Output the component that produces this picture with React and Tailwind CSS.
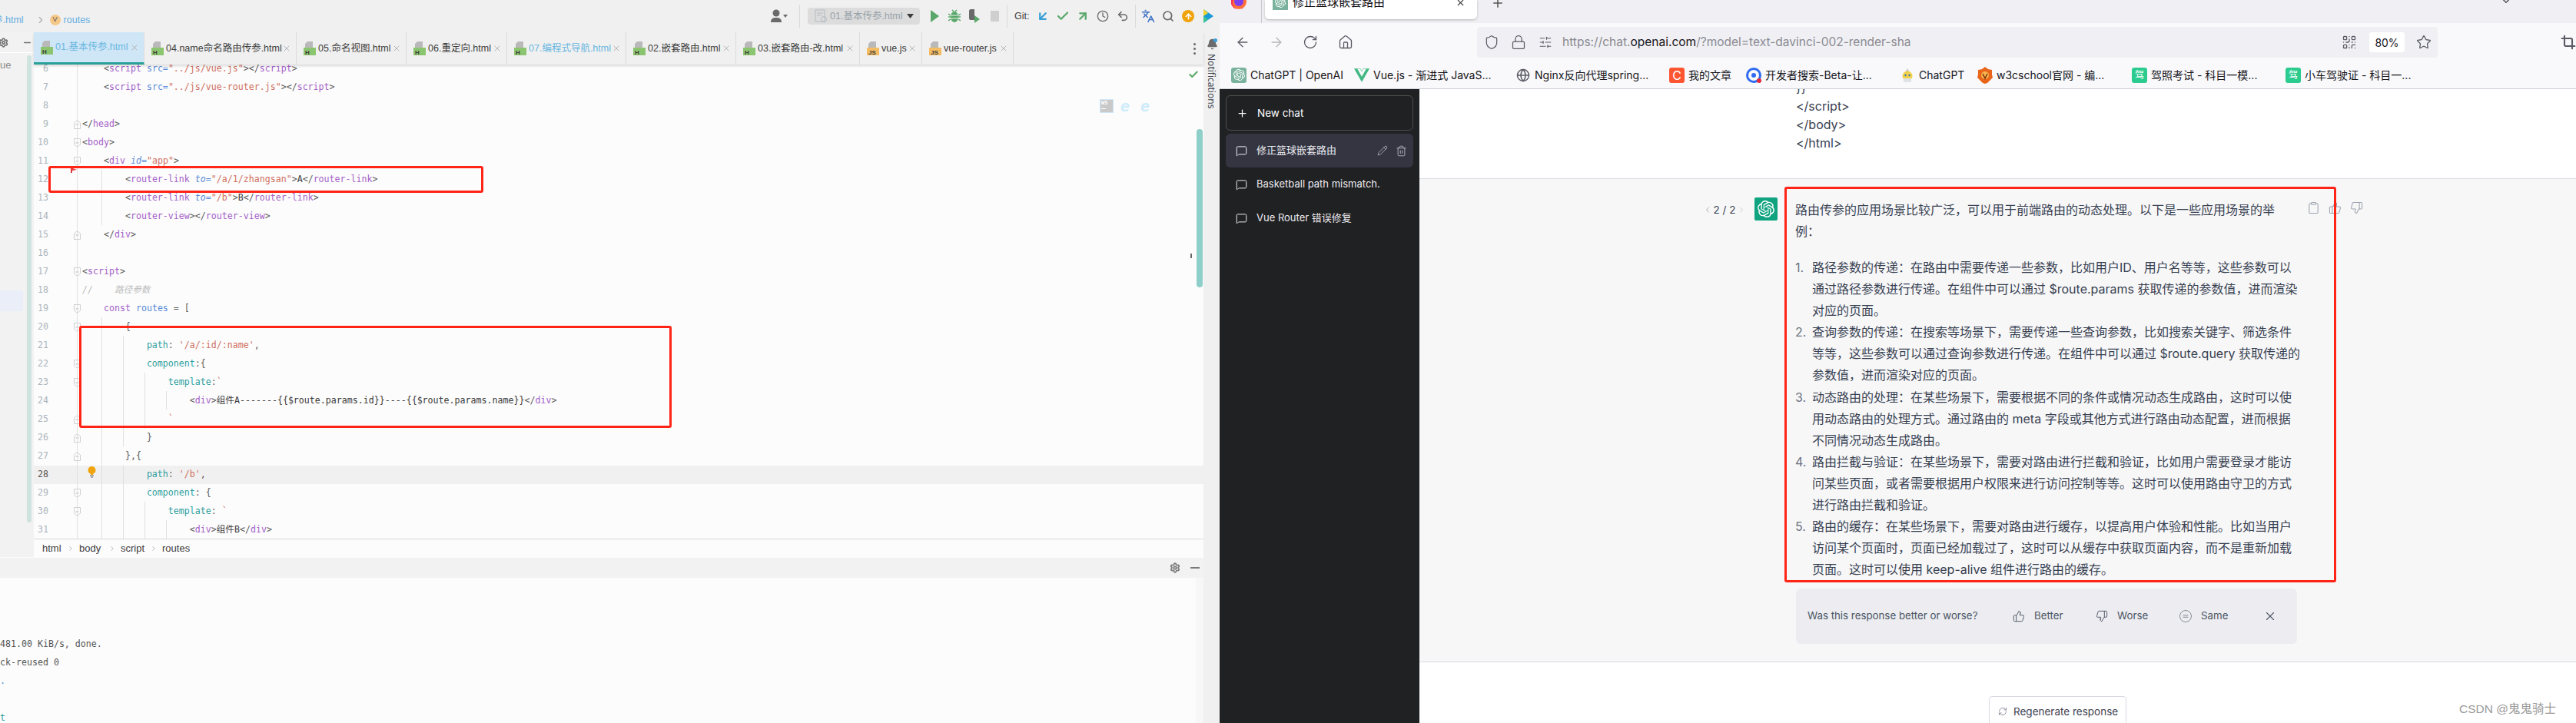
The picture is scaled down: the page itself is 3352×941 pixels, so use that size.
import React from 'react';
import {
  ArrowLeft, ArrowRight, RotateCw, Home, Shield, Lock, SlidersHorizontal, QrCode, Star, Crop, Plus, X,
  MessageSquare, Pencil, Trash2, ThumbsUp, ThumbsDown, Clipboard, RefreshCw, Globe, Check, ArrowDownLeft,
  ArrowUpRight, Clock, Undo2, Languages, Search, Settings, Minus, Bell, ArrowUp, ChevronRight, ChevronLeft, ChevronDown, Equal,
} from 'lucide-react';
import { SiOpenai, SiVuedotjs } from 'react-icons/si';

const UI = "font-['Inter','Noto_Sans_CJK_SC',sans-serif]";
const IDE = "font-['Liberation_Sans','Noto_Sans_CJK_SC',sans-serif]";
const MONO = "font-['DejaVu_Sans_Mono','Noto_Sans_CJK_SC',monospace]";

const C = {
  p: 'text-[#5c5c5c]',
  n: 'text-[#a45fc8]',
  a: 'text-[#5a8bd8]',
  s: 'text-[#cf6f60]',
  k: 'text-[#2f9f9f]',
  t: 'text-[#3a3a3a]',
  c: 'text-[#bdbdbd] italic',
  i: 'text-[#5a8bd8] italic',
};

const tag = (name, close) => [['p', close ? '</' : '<'], ['n', name]];
const lines = [
  { n: 6, x: [['t', '    '], ...tag('script'), ['t', ' '], ['a', 'src='], ['s', '"../js/vue.js"'], ['p', '>'], ...tag('script', 1), ['p', '>']] },
  { n: 7, x: [['t', '    '], ...tag('script'), ['t', ' '], ['a', 'src='], ['s', '"../js/vue-router.js"'], ['p', '>'], ...tag('script', 1), ['p', '>']] },
  { n: 8, x: [] },
  { n: 9, f: 'c', x: [...tag('head', 1), ['p', '>']] },
  { n: 10, f: 't', x: [...tag('body'), ['p', '>']] },
  { n: 11, f: 't', x: [['t', '    '], ...tag('div'), ['t', ' '], ['i', 'id'], ['a', '='], ['s', '"app"'], ['p', '>']] },
  { n: 12, x: [['t', '        '], ...tag('router-link'), ['t', ' '], ['i', 'to'], ['a', '='], ['s', '"/a/1/zhangsan"'], ['p', '>'], ['t', 'A'], ...tag('router-link', 1), ['p', '>']] },
  { n: 13, x: [['t', '        '], ...tag('router-link'), ['t', ' '], ['i', 'to'], ['a', '='], ['s', '"/b"'], ['p', '>'], ['t', 'B'], ...tag('router-link', 1), ['p', '>']] },
  { n: 14, x: [['t', '        '], ...tag('router-view'), ['p', '>'], ...tag('router-view', 1), ['p', '>']] },
  { n: 15, f: 'c', x: [['t', '    '], ...tag('div', 1), ['p', '>']] },
  { n: 16, x: [] },
  { n: 17, f: 't', x: [...tag('script'), ['p', '>']] },
  { n: 18, x: [['c', '//    路径参数']] },
  { n: 19, f: 't', x: [['t', '    '], ['n', 'const'], ['t', ' '], ['a', 'routes'], ['t', ' '], ['p', '= ['] ] },
  { n: 20, f: 't', x: [['t', '        '], ['p', '{']] },
  { n: 21, x: [['t', '            '], ['k', 'path'], ['p', ': '], ['s', "'/a/:id/:name'"], ['p', ',']] },
  { n: 22, f: 't', x: [['t', '            '], ['k', 'component'], ['p', ':{']] },
  { n: 23, f: 't', x: [['t', '                '], ['k', 'template'], ['p', ':'], ['s', '`']] },
  { n: 24, x: [['t', '                    '], ...tag('div'), ['p', '>'], ['t', '组件A-------{{$route.params.id}}----{{$route.params.name}}'], ...tag('div', 1), ['p', '>']] },
  { n: 25, f: 'c', x: [['t', '                '], ['s', '`']] },
  { n: 26, f: 'c', x: [['t', '            '], ['p', '}']] },
  { n: 27, f: 'c', x: [['t', '        '], ['p', '},{']] },
  { n: 28, x: [['t', '            '], ['k', 'path'], ['p', ': '], ['s', "'/b'"], ['p', ',']] },
  { n: 29, f: 't', x: [['t', '            '], ['k', 'component'], ['p', ': {']] },
  { n: 30, f: 't', x: [['t', '                '], ['k', 'template'], ['p', ': '], ['s', '`']] },
  { n: 31, x: [['t', '                    '], ...tag('div'), ['p', '>'], ['t', '组件B'], ...tag('div', 1), ['p', '>']] },
];

const guides = [
  { x: 100, a: 84, b: 701 },
  { x: 132, a: 221, b: 293 },
  { x: 132, a: 413, b: 701 },
  { x: 160, a: 437, b: 581 },
  { x: 160, a: 606, b: 701 },
  { x: 188, a: 485, b: 558 },
  { x: 188, a: 653, b: 701 },
  { x: 216, a: 509, b: 533 },
  { x: 216, a: 677, b: 701 },
];

const tabs = [
  { t: '01.基本传参.html', w: 'w-[144px]', active: true, blue: true },
  { t: '04.name命名路由传参.html', w: 'w-[198px]' },
  { t: '05.命名视图.html', w: 'w-[143px]' },
  { t: '06.重定向.html', w: 'w-[131px]' },
  { t: '07.编程式导航.html', w: 'w-[155px]', blue: true },
  { t: '02.嵌套路由.html', w: 'w-[143px]' },
  { t: '03.嵌套路由-改.html', w: 'w-[161px]' },
  { t: 'vue.js', w: 'w-[81px]', js: true },
  { t: 'vue-router.js', w: 'w-[119px]', js: true },
];

function FileIcon({ js }) {
  return (
    <svg width="16" height="18" viewBox="0 0 16 18" className="shrink-0">
      <path d="M5 0h7v9H2V3z" fill="#b9b9b9" />
      <rect x="0" y="8" width="16" height="10" fill={js ? '#f5bd63' : '#8cc56f'} />
      <text x="2" y="16.5" fontSize="8" fontWeight="700" fill="#3c3c3c" fontFamily="Liberation Sans">{js ? 'JS' : 'H'}</text>
    </svg>
  );
}

function Fold({ f }) {
  if (!f) return <span className="w-[9px]" />;
  return (
    <svg width="9" height="12" viewBox="0 0 9 12" className="shrink-0">
      {f === 't' ? (
        <path d="M.5.5h8v7.5l-4 3.5-4-3.5z" fill="#fcfcfc" stroke="#cfcfcf" />
      ) : (
        <path d="M.5 11.5h8V4L4.5.5.5 4z" fill="#fcfcfc" stroke="#cfcfcf" />
      )}
      <path d="M2.5 6h4" stroke="#b5b5b5" />
    </svg>
  );
}

function CodeLine({ l }) {
  const hl = l.n === 28;
  return (
    <div className={`flex h-[24px] items-center ${hl ? 'bg-[#f0f0f0]' : ''}`}>
      <span className={`w-[19px] shrink-0 text-right ${hl ? 'text-[#555]' : 'text-[#a9b4bd]'}`}>{l.n}</span>
      <span className="w-[33px] shrink-0" />
      <Fold f={l.f} />
      <span className="w-[2px] shrink-0" />
      <span className="whitespace-pre">
        {l.x.map((s, i) => (
          <span key={i} className={C[s[0]]}>{s[1]}</span>
        ))}
      </span>
    </div>
  );
}

function Slot({ children, w = 'w-[26px]' }) {
  return <span className={`flex shrink-0 items-center justify-center ${w}`}>{children}</span>;
}

function Toolbar() {
  return (
    <div className={`flex h-[42px] shrink-0 items-center bg-[#f0f0f0] text-[12.5px] ${IDE}`}>
      <div className="flex w-[999px] shrink-0 items-center overflow-hidden pt-[10px]">
        <span className="-ml-[9px] whitespace-nowrap text-[#65aee0]">参.html</span>
        <ChevronRight size={14} className="ml-[15px] text-[#aaa]" />
        <span className="ml-[5px] flex h-[14px] w-[14px] items-center justify-center rounded-full bg-[#f5c88a] text-[9px] text-[#555]">V</span>
        <span className="ml-[4px] text-[#65aee0]">routes</span>
      </div>
      <Slot w="w-[30px]">
        <svg width="24" height="18" viewBox="0 0 24 18">
          <circle cx="8" cy="5" r="4.5" fill="#6a6a6a" />
          <path d="M1 17c0-5 3-6 7-6s7 1 7 6z" fill="#6a6a6a" />
          <path d="M17 7h6l-3 4z" fill="#6a6a6a" />
        </svg>
      </Slot>
      <span className="ml-[11px] h-[30px] w-px bg-[#dadada]" />
      <div className="ml-[10px] flex h-[22px] w-[146px] shrink-0 items-center rounded-[4px] bg-[#dcdcdc] pl-[9px] pr-[8px] text-[#97a2a8]">
        <svg width="16" height="18" viewBox="0 0 16 18" className="shrink-0">
          <rect x="1" y="1" width="12" height="15" fill="none" stroke="#b4bcc0" />
          <path d="M3 5h8M3 8h6" stroke="#b4bcc0" />
          <circle cx="12" cy="13" r="3.5" fill="none" stroke="#b4bcc0" />
        </svg>
        <span className="ml-[4px] whitespace-nowrap">01.基本传参.html</span>
        <svg width="9" height="6" viewBox="0 0 9 6" className="ml-auto shrink-0"><path d="M0 0h9L4.5 6z" fill="#3c3c3c" /></svg>
      </div>
      <span className="ml-[6px] flex">
        <Slot><svg width="11" height="16" viewBox="0 0 11 16"><path d="M0 0l11 8-11 8z" fill="#59a869" /></svg></Slot>
        <Slot>
          <svg width="16" height="18" viewBox="0 0 16 18">
            <ellipse cx="8" cy="10" rx="5" ry="7" fill="#59a869" />
            <path d="M0 6l3 2M16 6l-3 2M0 10h3M16 10h-3M0 15l3-2M16 15l-3-2M5 1l2 2M11 1L9 3" stroke="#59a869" strokeWidth="1.5" />
            <path d="M3 8h10M3 12h10" stroke="#f0f0f0" />
          </svg>
        </Slot>
        <Slot>
          <svg width="16" height="18" viewBox="0 0 16 18">
            <path d="M1 2c0-1 1-2 2-2h5v14H3c-1 0-2-1-2-2z" fill="#6a6a6a" />
            <path d="M8 8l7 5-7 5z" fill="#59a869" />
          </svg>
        </Slot>
        <Slot><span className="block h-[14px] w-[11px] bg-[#cfcfcf]" /></Slot>
      </span>
      <span className="ml-[3px] h-[30px] w-px bg-[#dadada]" />
      <span className="ml-[9px] w-[24px] text-[#3c3c3c]">Git:</span>
      <span className="flex">
        <Slot><ArrowDownLeft size={18} strokeWidth={3} className="text-[#389fd6]" /></Slot>
        <Slot><Check size={18} strokeWidth={3} className="text-[#59a869]" /></Slot>
        <Slot><ArrowUpRight size={18} strokeWidth={3} className="text-[#59a869]" /></Slot>
        <Slot><Clock size={16} strokeWidth={2} className="text-[#6a6a6a]" /></Slot>
        <Slot><Undo2 size={16} strokeWidth={2.4} className="text-[#6a6a6a]" /></Slot>
      </span>
      <span className="ml-[3px] h-[30px] w-px bg-[#dadada]" />
      <span className="ml-[3px] flex">
        <Slot><Languages size={18} className="text-[#3c6fc4]" /></Slot>
        <Slot><Search size={16} strokeWidth={2.6} className="text-[#6a6a6a]" /></Slot>
        <Slot>
          <span className="flex h-[16px] w-[16px] items-center justify-center rounded-full bg-[#f0a30a]">
            <ArrowUp size={11} strokeWidth={3.5} className="text-white" />
          </span>
        </Slot>
        <Slot>
          <svg width="15" height="20" viewBox="0 0 15 20">
            <path d="M1 1l13 9-13 9z" fill="#1a9bd7" />
            <path d="M1 1v9l6-4z" fill="#f5d327" />
            <path d="M1 10v9l6-5z" fill="#3ec28f" />
          </svg>
        </Slot>
      </span>
    </div>
  );
}

function EditorColumn() {
  return (
    <div className="flex w-[1522px] shrink-0 flex-col">
      <div className={`relative z-10 flex h-[42px] shrink-0 items-stretch bg-[#f0f0f0] text-[12.5px] shadow-[0_2px_3px_rgba(0,0,0,0.14)] ${IDE}`}>
        {tabs.map((t) => (
          <div key={t.t} className={`flex shrink-0 items-center border-r border-[#dcdcdc] pl-[9px] pr-[6px] ${t.w} ${t.active ? 'border-b-[3px] border-b-[#2aa198] bg-[#cfe6f7]' : ''}`}>
            <FileIcon js={t.js} />
            <span className={`ml-[3px] whitespace-nowrap ${t.blue ? 'text-[#6ab7e0]' : 'text-[#3c3c3c]'}`}>{t.t}</span>
            <X size={12} className="ml-auto shrink-0 text-[#b5b5b5]" />
          </div>
        ))}
        <span className="ml-auto mr-[10px] flex flex-col items-center justify-center gap-[3px]">
          <span className="h-[3px] w-[3px] rounded-full bg-[#666]" />
          <span className="h-[3px] w-[3px] rounded-full bg-[#666]" />
          <span className="h-[3px] w-[3px] rounded-full bg-[#666]" />
        </span>
      </div>
      <div className={`relative h-[617px] shrink-0 overflow-hidden bg-[#fcfcfc] text-[11.62px] ${MONO}`}>
        <div className="-mt-[6px]">
          {lines.map((l) => <CodeLine key={l.n} l={l} />)}
        </div>
        {guides.map((g, i) => (
          <span key={i} className="absolute w-px bg-[#e0e0e0]" style={{ left: g.x - 44, top: g.a - 84, height: g.b - g.a }} />
        ))}
        <svg width="8" height="7" viewBox="0 0 8 7" className="absolute left-[48px] top-[134px]"><path d="M0 0l8 3-6 1v3H0z" fill="#e5383b" /></svg>
        <svg width="11" height="15" viewBox="0 0 11 15" className="absolute left-[70px] top-[523px]">
          <ellipse cx="5.5" cy="5" rx="5" ry="5" fill="#f0a30a" />
          <path d="M4 9h3v2H4z" fill="#f0a30a" />
          <path d="M3 12h5M4 14h3" stroke="#6a6a6a" />
        </svg>
        <Check size={14} strokeWidth={3.5} className="absolute left-[1502px] top-[6px] text-[#59a869]" />
        <span className="absolute left-[1388px] top-[46px] flex h-[16px] w-[16px] flex-col bg-[#c9c9c9] pl-[1px] text-[7px] font-bold leading-[9px] text-white outline-1 outline-[#cfe6f7]">WS<span className="mt-[2px] h-px w-[6px] bg-white" /></span>
        <span className="absolute left-[1414px] top-[42px] text-[20px] font-bold italic leading-[24px] text-[#cdebfa]">e</span>
        <span className="absolute left-[1440px] top-[42px] text-[20px] font-bold italic leading-[24px] text-[#cdebfa]">e</span>
        <span className="absolute left-[1505px] top-[246px] h-[6px] w-[2px] bg-[#666]" />
        <span className="absolute left-[1513px] top-[84px] h-[206px] w-[8px] rounded-full bg-[#8fcfc9]" />
      </div>
      <div className={`flex h-[24px] shrink-0 items-center border-t border-[#d8d8d8] bg-[#fcfcfc] pl-[11px] text-[13px] text-[#3c3c3c] ${IDE}`}>
        <span className="w-[24px]">html</span>
        <ChevronRight size={10} className="ml-[8px] mr-[6px] text-[#aaa]" />
        <span className="w-[30px]">body</span>
        <ChevronRight size={10} className="ml-[8px] mr-[6px] text-[#aaa]" />
        <span className="w-[30px]">script</span>
        <ChevronRight size={10} className="ml-[8px] mr-[6px] text-[#aaa]" />
        <span>routes</span>
      </div>
    </div>
  );
}

function Ide() {
  return (
    <div className="flex w-[1587px] shrink-0 flex-col">
      <Toolbar />
      <div className="flex min-h-0 flex-1">
        <div className="flex w-[1566px] shrink-0 flex-col">
          <div className="flex h-[683px] shrink-0">
            <div className={`flex w-[44px] shrink-0 flex-col bg-[#f2f2f2] text-[13px] ${IDE}`}>
              <div className="flex h-[27px] shrink-0 items-center justify-between border-b border-white pr-[2px]">
                <Settings size={13} strokeWidth={3} className="-ml-[2px] text-[#707070]" />
                <Minus size={13} strokeWidth={3} className="text-[#707070]" />
              </div>
              <div className="flex min-h-0 flex-1">
                <div className="w-[35px] shrink-0">
                  <div className="mt-[7px] leading-[18px] text-[#8a8a8a]">ue</div>
                  <div className="mt-[284px] h-[27px] w-[30px] rounded-r-[3px] bg-[#e9eef8]" />
                </div>
                <div className="mt-[3px] h-[608px] w-[6px] shrink-0 rounded-full bg-[#cfe3df]" />
              </div>
            </div>
            <EditorColumn />
          </div>
          <div className="flex h-[27px] shrink-0 items-center justify-end gap-[13px] border-t border-[#fcfcfc] bg-[#f2f2f2] pr-[1px]">
            <Settings size={14} strokeWidth={3} className="text-[#7a7a7a]" />
            <span className="mr-[4px] h-[2px] w-[12px] bg-[#7a7a7a]" />
          </div>
          <div className="flex min-h-0 flex-1 bg-[#fcfcfc]">
            <div className={`flex-1 overflow-hidden pt-[74px] text-[11.62px] leading-[24px] text-[#555] ${MONO}`}>
              <div>481.00 KiB/s, done.</div>
              <div>ck-reused 0</div>
              <div className="text-[#5a8bd8]">.</div>
              <div className="h-[24px]" />
              <div className="text-[#2f9f9f]">t</div>
            </div>
            <div className="w-[10px] bg-[#f7f7f7]" />
          </div>
        </div>
        <div className="w-[21px] shrink-0 bg-[#f0f0f0] pt-[8px] font-['Noto_Sans',sans-serif] text-[#3f4750]">
          <div className="relative ml-[4px] h-[20px]">
            <Bell size={15} fill="#6a6a6a" className="text-[#6a6a6a]" />
            <span className="absolute left-[9px] top-0 h-[5px] w-[5px] rounded-full bg-[#389fd6]" />
          </div>
          <div className="ml-[2px] text-[12px] leading-[16px] [writing-mode:vertical-rl]">Notifications</div>
        </div>
      </div>
    </div>
  );
}

function Fav({ bg, children, round }) {
  return (
    <span className={`flex h-[20px] w-[20px] shrink-0 items-center justify-center ${round ? 'rounded-full' : 'rounded-[3px]'} ${bg}`}>{children}</span>
  );
}

const bookmarks = [
  { t: 'ChatGPT | OpenAI', w: 'w-[160px]', i: <Fav bg="bg-[#7ab29e]"><SiOpenai size={15} className="text-white" /></Fav> },
  { t: 'Vue.js - 渐进式 JavaS...', w: 'w-[210px]', i: <span className="flex w-[20px] shrink-0 justify-center"><SiVuedotjs size={20} className="text-[#41b883]" /></span> },
  { t: 'Nginx反向代理spring...', w: 'w-[200px]', i: <span className="flex w-[20px] justify-center"><Globe size={18} className="text-[#5b5b66]" /></span> },
  { t: '我的文章', w: 'w-[100px]', i: <Fav bg="bg-[#fc5531]"><span className="text-[16px] leading-none text-white">C</span></Fav> },
  { t: '开发者搜索-Beta-让...', w: 'w-[200px]', i: (
    <span className="relative flex h-[20px] w-[20px] shrink-0 items-center justify-center rounded-full border-[3px] border-[#2f6bf0]">
      <span className="h-[6px] w-[6px] rounded-full bg-[#2f6bf0]" />
      <span className="absolute -bottom-[3px] -right-[3px] h-[6px] w-[6px] rounded-full bg-[#e5283b]" />
    </span>
  ) },
  { t: 'ChatGPT', w: 'w-[101px]', i: (
    <svg width="20" height="20" viewBox="0 0 20 20" className="shrink-0">
      <path d="M10 1l3 5H7z" fill="#c9c9c9" />
      <circle cx="10" cy="11" r="6.5" fill="#f0d24a" />
      <rect x="5" y="14" width="10" height="5" rx="1" fill="#dfe3e8" />
      <circle cx="7.5" cy="10" r="1.2" fill="#3c6fc4" /><circle cx="12.5" cy="10" r="1.2" fill="#3c6fc4" />
    </svg>
  ) },
  { t: 'w3cschool官网 - 编...', w: 'w-[201px]', i: (
    <svg width="20" height="22" viewBox="0 0 20 22" className="shrink-0">
      <path d="M10 0l4 3 5 1v6l1 4-4 4-3 3-3 1-3-1-3-3-4-4 1-4V4l5-1z" fill="#e8651a" />
      <circle cx="10" cy="11" r="5" fill="#f8b451" />
      <path d="M7 9l3 6 3-6" stroke="#7a3000" strokeWidth="1.5" fill="none" />
    </svg>
  ) },
  { t: '驾照考试 - 科目一模...', w: 'w-[200px]', i: <Fav bg="bg-[#2ccb8f]"><span className="text-[12px] leading-none text-white">驾</span></Fav> },
  { t: '小车驾驶证 - 科目一...', w: 'w-[178px]', i: <Fav bg="bg-[#2ccb8f]"><span className="text-[12px] leading-none text-white">驾</span></Fav> },
];

function BrowserChrome() {
  return (
    <>
      <div className={`flex h-[30px] shrink-0 overflow-hidden bg-[#f0f0f4] text-[15px] text-[#15141a] ${UI}`}>
        <svg width="20" height="20" viewBox="0 0 20 20" className="-mt-[8px] ml-[15px] shrink-0">
          <circle cx="10" cy="10" r="10" fill="#ff7139" />
          <circle cx="10" cy="10" r="6" fill="#7b3ff0" />
          <path d="M0 8a10 10 0 0 0 18 8A8 8 0 0 1 3 8z" fill="#ff2f4e" />
        </svg>
        <span className="ml-[19px] h-[30px] w-px bg-[#c8c8cc]" />
        <div className="ml-[4px] flex h-[25px] w-[276px] shrink-0 items-center rounded-b-[5px] bg-white pb-[19px] pl-[10px] pr-[15px] shadow-[0_1px_3px_rgba(0,0,0,0.25)]">
          <span className="flex h-[20px] w-[20px] shrink-0 items-center justify-center bg-[#7ab29e]"><SiOpenai size={14} className="text-white" /></span>
          <span className="ml-[6px] whitespace-nowrap">修正篮球嵌套路由</span>
          <X size={13} className="ml-auto shrink-0 text-[#3c3c3c]" />
        </div>
        <Plus size={18} className="ml-[18px] mt-[-5px] shrink-0 text-[#555]" />
        <ChevronDown size={18} className="ml-[1294px] -mt-[8px] shrink-0 text-[#555]" />
      </div>
      <div className={`flex h-[50px] shrink-0 items-center bg-[#f9f9fb] pl-[8px] ${UI}`}>
        <Slot w="w-[44px]"><ArrowLeft size={20} strokeWidth={1.6} className="text-[#5b5b66]" /></Slot>
        <Slot w="w-[44px]"><ArrowRight size={20} strokeWidth={1.6} className="text-[#b5b5bb]" /></Slot>
        <Slot w="w-[44px]"><RotateCw size={20} strokeWidth={1.6} className="text-[#5b5b66]" /></Slot>
        <Slot w="ml-[2px] w-[44px]"><Home size={20} strokeWidth={1.6} className="text-[#5b5b66]" /></Slot>
        <div className="ml-[149px] flex h-[40px] w-[1250px] shrink-0 items-center rounded-[4px] bg-[#f0f0f4] pl-[8px] pr-[7px]">
          <Slot w="w-[22px]"><Shield size={20} strokeWidth={1.5} className="text-[#5b5b66]" /></Slot>
          <Slot w="ml-[13px] w-[22px]"><Lock size={20} strokeWidth={1.5} className="text-[#5b5b66]" /></Slot>
          <Slot w="ml-[13px] w-[22px]"><SlidersHorizontal size={18} strokeWidth={1.6} className="text-[#5b5b66]" /></Slot>
          <span className="ml-[11px] whitespace-nowrap text-[15.5px] text-[#8a8a92]">
            https://chat.<span className="text-[#15141a]">openai.com</span>/?model=text-davinci-002-render-sha
          </span>
          <Slot w="ml-auto w-[22px]"><QrCode size={20} strokeWidth={1.6} className="text-[#5b5b66]" /></Slot>
          <span className="ml-[15px] flex h-[26px] w-[46px] shrink-0 items-center justify-center rounded-[3px] bg-white text-[14px] text-[#15141a]">80%</span>
          <Slot w="ml-[14px] w-[22px]"><Star size={20} strokeWidth={1.6} className="text-[#5b5b66]" /></Slot>
        </div>
        <Crop size={20} strokeWidth={2.5} className="ml-[160px] shrink-0 text-[#5b5b66]" />
      </div>
      <div className={`flex h-[36px] shrink-0 items-center border-b border-[#cfcfd8] bg-[#f9f9fb] pl-[15px] text-[14px] text-[#15141a] ${UI}`}>
        {bookmarks.map((b) => (
          <div key={b.t} className={`flex shrink-0 items-center gap-[5px] whitespace-nowrap ${b.w}`}>
            {b.i}
            <span>{b.t}</span>
          </div>
        ))}
      </div>
    </>
  );
}

function Row({ t, active }) {
  return (
    <div className={`flex h-[44px] items-center rounded-[6px] pl-[13px] pr-[8px] text-[#ececf1] ${active ? 'bg-[#343541]' : ''}`}>
      <MessageSquare size={15} strokeWidth={1.6} className="shrink-0" />
      <span className="ml-[12px] whitespace-nowrap">{t}</span>
      {active && <Pencil size={14} strokeWidth={1.5} className="ml-auto shrink-0 text-[#b4b4bd]" />}
      {active && <Trash2 size={15} strokeWidth={1.5} className="ml-[10px] shrink-0 text-[#b4b4bd]" />}
    </div>
  );
}

function Sidebar() {
  return (
    <div className={`w-[260px] shrink-0 bg-[#202123] px-[8px] pt-[8px] text-[13px] ${UI}`}>
      <div className="flex h-[46px] items-center rounded-[6px] border border-[#4d4d4f] pl-[13px] text-[13.5px] text-white">
        <Plus size={15} className="shrink-0" />
        <span className="ml-[12px]">New chat</span>
      </div>
      <div className="mt-[4px]">
        <Row t="修正篮球嵌套路由" active />
        <Row t="Basketball path mismatch." />
        <Row t="Vue Router 错误修复" />
      </div>
    </div>
  );
}

const intro = ['路由传参的应用场景比较广泛，可以用于前端路由的动态处理。以下是一些应用场景的举', '例：'];
const items = [
  ['路径参数的传递：在路由中需要传递一些参数，比如用户ID、用户名等等，这些参数可以', '通过路径参数进行传递。在组件中可以通过 $route.params 获取传递的参数值，进而渲染', '对应的页面。'],
  ['查询参数的传递：在搜索等场景下，需要传递一些查询参数，比如搜索关键字、筛选条件', '等等，这些参数可以通过查询参数进行传递。在组件中可以通过 $route.query 获取传递的', '参数值，进而渲染对应的页面。'],
  ['动态路由的处理：在某些场景下，需要根据不同的条件或情况动态生成路由，这时可以使', '用动态路由的处理方式。通过路由的 meta 字段或其他方式进行路由动态配置，进而根据', '不同情况动态生成路由。'],
  ['路由拦截与验证：在某些场景下，需要对路由进行拦截和验证，比如用户需要登录才能访', '问某些页面，或者需要根据用户权限来进行访问控制等等。这时可以使用路由守卫的方式', '进行路由拦截和验证。'],
  ['路由的缓存：在某些场景下，需要对路由进行缓存，以提高用户体验和性能。比如当用户', '访问某个页面时，页面已经加载过了，这时可以从缓存中获取页面内容，而不是重新加载', '页面。这时可以使用 keep-alive 组件进行路由的缓存。'],
];

function Chat() {
  return (
    <div className={`flex min-w-0 flex-1 flex-col overflow-hidden bg-white text-[#374151] ${UI}`}>
      <div className="h-[117px] shrink-0 overflow-hidden border-b border-[#d9d9e3] pl-[490px] text-[16px] leading-[24px]">
        <div className="-mt-[14px]">
          <div>{'}}'}</div>
          <div>&lt;/script&gt;</div>
          <div>&lt;/body&gt;</div>
          <div>&lt;/html&gt;</div>
        </div>
      </div>
      <div className="h-[629px] shrink-0 border-b border-[#d9d9e3] bg-[#f7f7f8] pt-[24px]">
        <div className="ml-[372px] flex items-start">
          <div className="mt-[6px] flex h-[20px] w-[50px] shrink-0 items-center justify-between text-[13.5px]">
            <ChevronLeft size={12} className="-ml-[3px] text-[#aaa]" />
            <span>2 / 2</span>
            <ChevronRight size={12} className="-mr-[3px] text-[#ccc]" />
          </div>
          <span className="ml-[14px] flex h-[30px] w-[30px] shrink-0 items-center justify-center rounded-[2px] bg-[#10a37f]">
            <SiOpenai size={22} className="text-white" />
          </span>
          <div className="ml-[23px] w-[664px] shrink-0 whitespace-nowrap text-[16px]">
            <div className="mt-[2px] leading-[28px]">
              {intro.map((l) => <div key={l}>{l}</div>)}
            </div>
            <div className="mt-[19px]">
              {items.map((it, i) => (
                <div key={i} className="flex leading-[28.1px]">
                  <span className="w-[22px] shrink-0 text-[#6b7280]">{i + 1}.</span>
                  <div>{it.map((l) => <div key={l}>{l}</div>)}</div>
                </div>
              ))}
            </div>
            <div className="ml-[1px] mt-[11px] flex h-[72px] w-[652px] items-center rounded-[6px] bg-[#ececf1] pl-[15px] text-[13.3px] text-[#4b5563]">
              <span className="w-[267px] shrink-0 whitespace-nowrap">Was this response better or worse?</span>
              <ThumbsUp size={16} strokeWidth={1.4} className="shrink-0" />
              <span className="ml-[12px] w-[80px]">Better</span>
              <ThumbsDown size={16} strokeWidth={1.4} className="shrink-0" />
              <span className="ml-[12px] w-[81px]">Worse</span>
              <span className="flex h-[16px] w-[16px] shrink-0 items-center justify-center rounded-full border border-[#8a8f98]"><Equal size={10} strokeWidth={1.6} /></span>
              <span className="ml-[12px] w-[81px]">Same</span>
              <X size={18} strokeWidth={1.5} className="shrink-0" />
            </div>
          </div>
          <Clipboard size={17} strokeWidth={1.5} className="ml-[2px] mt-[5px] shrink-0 text-[#9ca3af]" />
          <ThumbsUp size={17} strokeWidth={1.5} className="ml-[11px] mt-[5px] shrink-0 text-[#9ca3af]" />
          <ThumbsDown size={17} strokeWidth={1.5} className="ml-[11px] mt-[5px] shrink-0 text-[#9ca3af]" />
        </div>
      </div>
      <div className="pl-[741px] pt-[44px]">
        <div className="flex h-[40px] w-[179px] items-center rounded-[4px] border border-[#d9d9e3] bg-white pl-[11px] text-[13.5px] text-[#40414f]">
          <RefreshCw size={12} className="shrink-0 text-[#8e8ea0]" />
          <span className="ml-[8px] whitespace-nowrap">Regenerate response</span>
        </div>
      </div>
    </div>
  );
}

const RED = 'pointer-events-none absolute rounded-[3px] border-[3px] border-[#ff2416]';

export default function App() {
  return (
    <div className="relative flex h-[941px] w-[3352px] overflow-hidden bg-white">
      <Ide />
      <div className="flex w-[1765px] shrink-0 flex-col">
        <BrowserChrome />
        <div className="flex min-h-0 flex-1">
          <Sidebar />
          <Chat />
        </div>
      </div>
      <div className={`${RED} left-[63px] top-[216px] h-[35px] w-[566px]`} />
      <div className={`${RED} left-[103px] top-[424px] h-[133px] w-[771px]`} />
      <div className={`${RED} left-[2322px] top-[243px] h-[515px] w-[718px]`} />
      <div className="absolute left-[3200px] top-[913px] font-['Liberation_Sans','Noto_Sans_CJK_SC',sans-serif] text-[15.5px] leading-[20px] text-[#9a9a9a]">CSDN @鬼鬼骑士</div>
    </div>
  );
}
